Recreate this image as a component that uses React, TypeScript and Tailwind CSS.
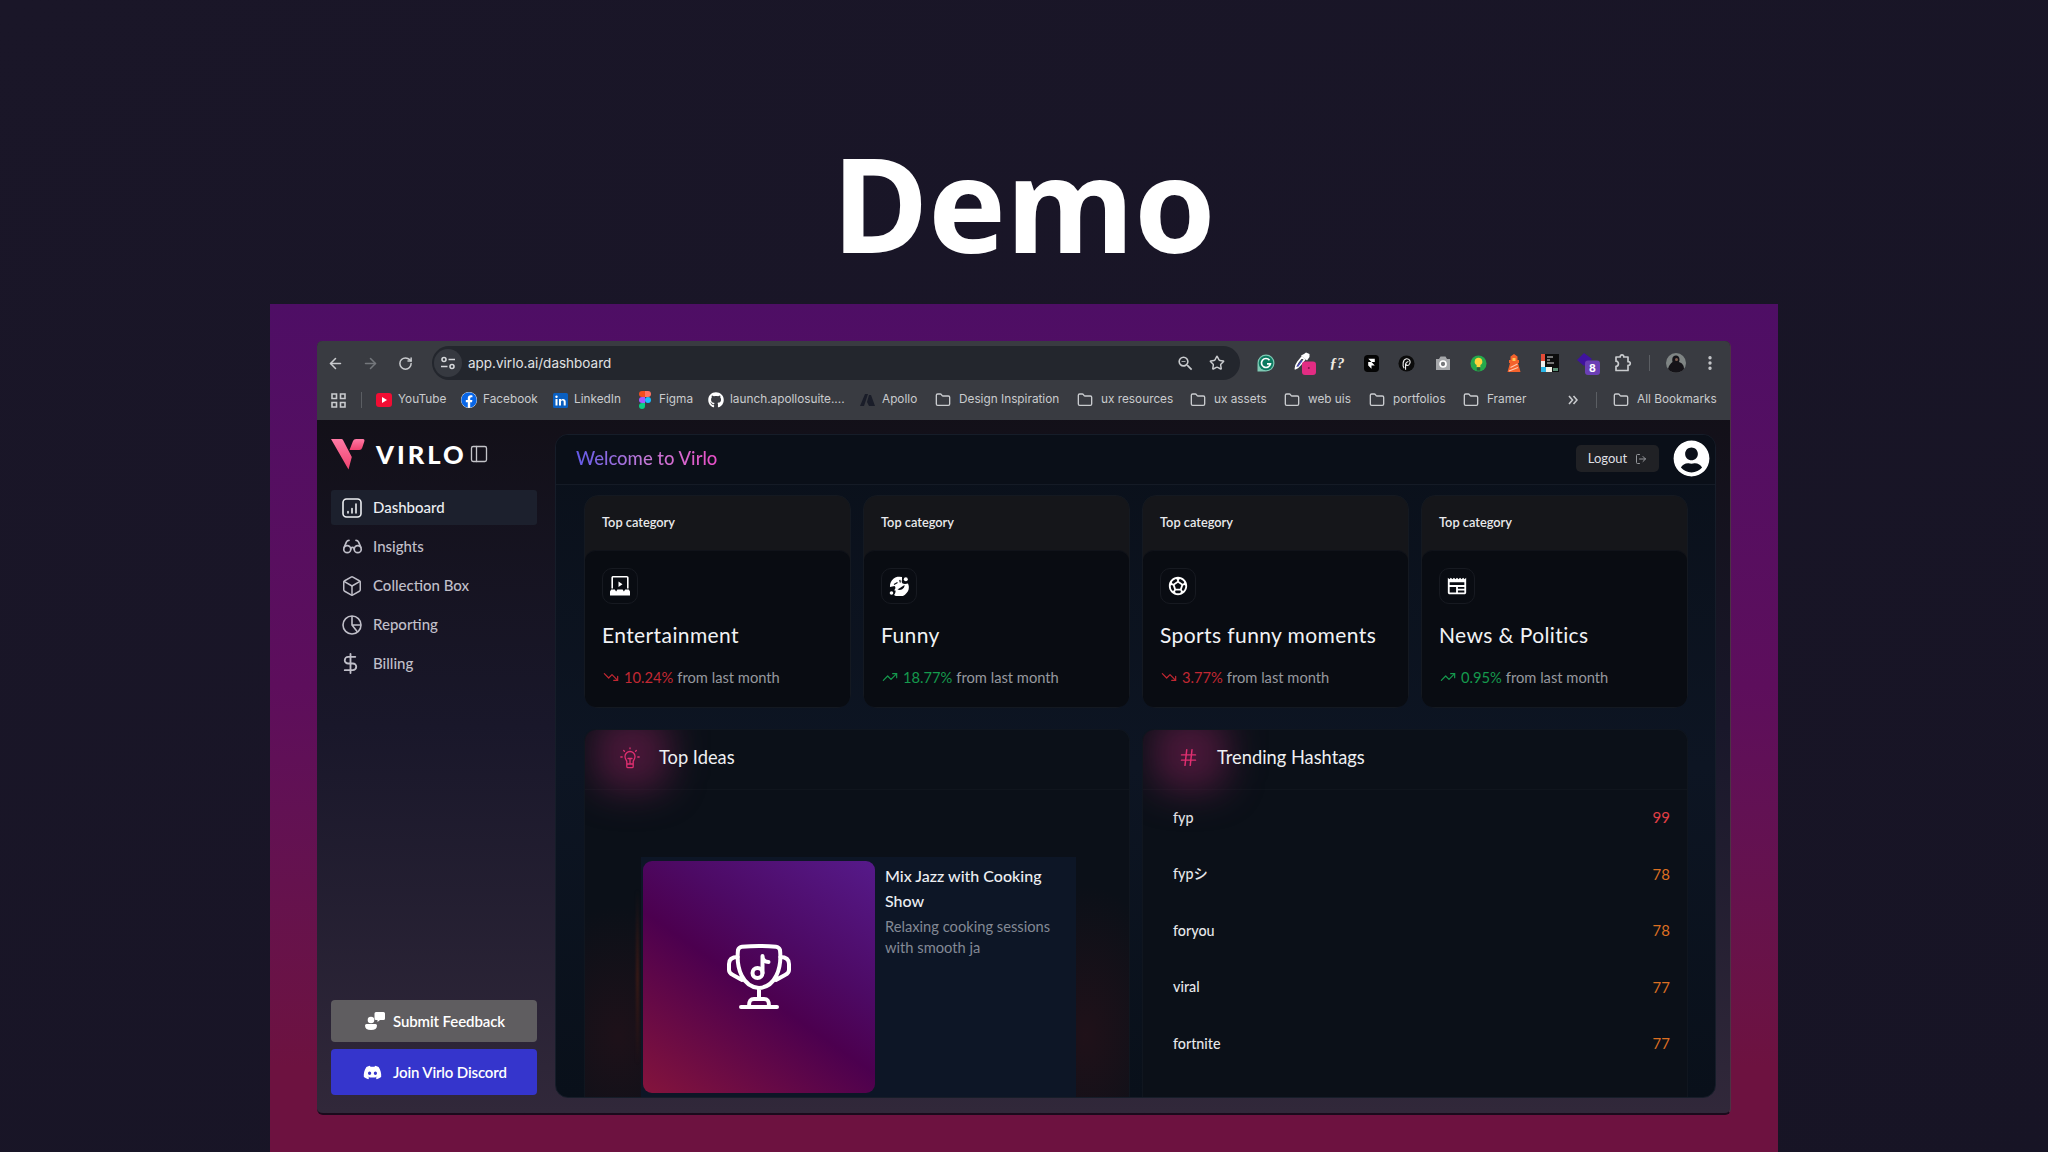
import type { ReactNode } from "react";
import { clsx } from "clsx";
import {
  ArrowLeft,
  ArrowRight,
  Box,
  DollarSign,
  EllipsisVertical,
  Folder,
  Glasses,
  Hash,
  LogOut,
  PanelLeft,
  RotateCw,
  Star,
  TrendingDown,
  TrendingUp,
} from "lucide-react";
import { FaDiscord, FaFacebook, FaGithub, FaUserCircle } from "react-icons/fa";
import { MdNewspaper, MdSportsSoccer, MdZoomOut } from "react-icons/md";

type Category = { name: string; change: string; up: boolean; icon: ReactNode };

function TheaterIcon() {
  return (
    <svg viewBox="0 0 20 20" className="size-5" fill="#fff">
      <path d="M2.2 12.500V1.500A1 1 0 0 1 3.200.8h13.600a1 1 0 0 1 1 1V12.500" fill="none" stroke="#fff" strokeWidth="1.600" />
      <path d="M8.500 5.500v5.500l4-2.750zM0 19.500v-4l1.200-2h3.600l1.300 2 1.300-2h5.200l1.300 2 1.300-2h3.600l1.200 2v4z" />
    </svg>
  );
}

function FunnyIcon() {
  return (
    <svg viewBox="0 0 20 20" className="size-5" fill="#fff">
      <path d="M13 1A9.500 9.500 0 0 0 1 11l4.500-1c1.500 1 1 3-.5 4.200l1.500.3c.3 1.800-.5 3.500-1.500 4.500A9.500 9.500 0 0 0 19 7.500L16 8c-2.500 0-4-1.500-3-4z" />
      <path d="M8.500 13.500l7-4.500c.3 3-3 6-7 4.500z" fill="#080b12" />
      <path d="M5 8.500l3.500-2M10.800 3.800l.5 2.700" stroke="#080b12" strokeWidth="1.200" />
      <circle cx="16.800" cy="3.200" r="2" />
      <circle cx="2.500" cy="17" r="1.800" />
    </svg>
  );
}

const categories: Category[] = [
  { name: "Entertainment", change: "10.24%", up: false, icon: <TheaterIcon /> },
  { name: "Funny", change: "18.77%", up: true, icon: <FunnyIcon /> },
  { name: "Sports funny moments", change: "3.77%", up: false, icon: <MdSportsSoccer className="size-[22px]" /> },
  { name: "News & Politics", change: "0.95%", up: true, icon: <MdNewspaper className="size-[22px]" /> },
];

const hashtags = [
  { tag: "fyp", score: 99 },
  { tag: "fypシ", score: 78 },
  { tag: "foryou", score: 78 },
  { tag: "viral", score: 77 },
  { tag: "fortnite", score: 77 },
];

function ChartIcon() {
  return (
    <svg viewBox="0 0 20 20" className="size-5" fill="none" stroke="currentColor" strokeWidth="1.600" strokeLinecap="round">
      <rect x="1" y="1" width="18" height="18" rx="3.500" />
      <path d="M6 15v-1.500M10 15v-4.500M14 15V6" />
    </svg>
  );
}

function PieIcon() {
  return (
    <svg viewBox="0 0 20 20" className="size-5" fill="none" stroke="currentColor" strokeWidth="1.600" strokeLinejoin="round">
      <circle cx="10" cy="10" r="9" />
      <path d="M10 1v9l5.500 7M10 10h9" />
    </svg>
  );
}

const navItems = [
  { label: "Dashboard", icon: <ChartIcon /> },
  { label: "Insights", icon: <Glasses className="size-[21px]" strokeWidth={1.900} /> },
  { label: "Collection Box", icon: <Box className="-ml-px size-[22px]" strokeWidth={1.600} /> },
  { label: "Reporting", icon: <PieIcon /> },
  { label: "Billing", icon: <DollarSign className="-ml-[3px] size-[23px]" strokeWidth={1.900} /> },
];

function FigmaIcon() {
  return (
    <svg viewBox="0 0 12 18" className="h-[18px] w-3">
      <path d="M3 0h3v6H3a3 3 0 0 1 0-6z" fill="#f24e1e" />
      <path d="M6 0h3a3 3 0 0 1 0 6H6z" fill="#ff7262" />
      <path d="M3 6h3v6H3a3 3 0 0 1 0-6z" fill="#a259ff" />
      <circle cx="9" cy="9" r="3" fill="#1abcfe" />
      <path d="M3 12h3v3a3 3 0 1 1-3-3z" fill="#0acf83" />
    </svg>
  );
}

function Bookmark({ icon, label, className }: { icon: ReactNode; label: string; className: string }) {
  return (
    <div className={clsx("flex shrink-0 items-center whitespace-nowrap", className)}>
      {icon}
      <span>{label}</span>
    </div>
  );
}

function FolderIcon() {
  return <Folder className="h-4 w-[18px]" strokeWidth={2} />;
}

function Extensions() {
  return (
    <div className="flex items-center">
      <svg viewBox="0 0 18 18" className="size-[18px]">
        <path d="M9 .5A8.500 8.500 0 1 1 9 17.500H.5V9A8.500 8.500 0 0 1 9 .5z" fill="#7fc9b4" />
        <circle cx="9" cy="9" r="7.300" fill="#0c7a60" />
        <path d="M12.500 6.200a4.500 4.500 0 1 0 .9 3.600H10" fill="none" stroke="#fff" strokeWidth="1.700" />
      </svg>
      <svg viewBox="0 0 24 24" className="ml-[17px] size-6">
        <path d="M3.500 17.500c0-3 1-4.500 2.500-6.500l4-5 2.500 2.500-4 5c-1.500 2-2.500 3.500-5 4z" fill="none" stroke="#fff" strokeWidth="1.800" />
        <path d="M5.500 15.500l4.500-6" stroke="#4a4cc4" strokeWidth="1.300" />
        <path d="M9 4.500l3-1.500 2-1.500 3.500 1.500v3l-2.500 3.500z" fill="#fff" />
        <rect x="10" y="10.500" width="14" height="13.500" rx="3" fill="#e32c83" />
        <circle cx="16.800" cy="17" r="1" fill="#84144b" />
      </svg>
      <span className="ml-[11px] w-5 text-center font-['Liberation_Serif'] text-[15px] leading-5 font-bold text-[#eeeae2] italic">ƒ?</span>
      <svg viewBox="0 0 16 18" className="ml-[17px] h-[17px] w-[15px]">
        <rect width="16" height="18" rx="4" fill="#050505" />
        <path d="M4.500 4h7v3.500H8l3.500 3.500H8v3.500L4.500 11V7.500H8z" fill="#fff" />
      </svg>
      <svg viewBox="0 0 18 18" className="ml-[19px] size-[17px]">
        <circle cx="9" cy="9" r="8.500" fill="#0b0b0b" />
        <path d="M6.500 14c-2-3-1.500-9.500 2.500-10 4-.3 5 4.500 2.500 6.500-2 1.500-4-.5-3-2 1-1.300 2.200-.8 2-2M8 15.500V9" fill="none" stroke="#eee" strokeWidth="1.200" />
      </svg>
      <svg viewBox="0 0 16 16" className="ml-5 size-4">
        <path d="M1 4h3l1.500-2.500h5L12 4h3v11H1z" fill="#a5a7aa" />
        <circle cx="8" cy="9" r="3" fill="#77797c" stroke="#fff" strokeWidth="1.700" />
      </svg>
      <svg viewBox="0 0 18 18" className="ml-[19px] size-[17px]">
        <circle cx="9" cy="9" r="8.500" fill="#25a94c" />
        <path d="M9 3a4 4 0 0 0-2 7.500V13h4v-2.500A4 4 0 0 0 9 3z" fill="#ffd23c" />
        <path d="M7.200 13h3.600v3.500H7.200z" fill="#2d5b39" />
      </svg>
      <svg viewBox="0 0 14 18" className="ml-5 h-[18px] w-3.5">
        <path d="M7 0l3.500 2.500V6H12v3h-1l2.500 9H.5L3 9H2V6h1.500V2.500z" fill="#f4622c" />
        <path d="M5.500 4h3v3h-3z" fill="#ffc857" />
        <path d="M3.500 13.500l7-3.500M2 17l9-3.500" stroke="#ffc6ad" strokeWidth="1.300" />
      </svg>
      <svg viewBox="0 0 18 18" className="ml-5 size-[18px]">
        <rect width="18" height="18" fill="#0d0d0d" />
        <rect width="4" height="7" fill="#e64b37" />
        <path d="M0 7h4v6H0z" fill="#eee" />
        <rect y="13" width="5" height="5" fill="#29b6e8" />
        <path d="M5 13h6v5H5z" fill="#f1f1e7" />
        <path d="M12 14h5v3h-5z" fill="#5b8f76" />
        <path d="M6 3h6M6 6h3M6 9h7" stroke="#ddd" strokeWidth="1.200" />
      </svg>
      <svg viewBox="0 0 24 24" className="ml-[17px] size-6">
        <path d="M8 2l8 6-8 7-7-6z" fill="#3f139e" />
        <rect x="9" y="9.500" width="15" height="14.500" rx="3" fill="#6b3fb5" />
        <text x="16.500" y="20.500" fontSize="10.500" fontWeight="700" fill="#fff" textAnchor="middle" fontFamily="Inter, sans-serif">8</text>
      </svg>
      <svg viewBox="0 0 20 20" className="ml-[13px] size-5" fill="none" stroke="currentColor" strokeWidth="1.700" strokeLinejoin="round">
        <path d="M3 4h4.200C7 1.200 11 1.200 10.800 4H15v4.700c3-.2 3 3.800 0 3.600V17.500H3v-4.200c3.200 0 3.200-5.100 0-5.100z" />
      </svg>
    </div>
  );
}

function BrowserChrome() {
  return (
    <div className="h-[79px] shrink-0 rounded-t-[5px] bg-[#393b41] font-['Inter',sans-serif] text-[#c9cbce]">
      <div className="flex h-11 items-center pl-2.5">
        <ArrowLeft className="size-[17px]" strokeWidth={2.200} />
        <ArrowRight className="ml-[18px] size-[17px] text-[#74777c]" strokeWidth={2.200} />
        <RotateCw className="ml-[19px] size-[15px]" strokeWidth={2.400} />
        <div className="ml-[19px] flex h-[34px] w-[808px] items-center rounded-full bg-[#23262d] pl-[2px]">
          <span className="flex size-7 items-center justify-center rounded-full bg-[#363940]">
            <svg viewBox="0 0 14 14" className="size-3.5" fill="none" stroke="#d5d7da" strokeWidth="1.600">
              <circle cx="3" cy="3.500" r="2" />
              <path d="M7.500 3.500H14M0 10.500h6.500" />
              <circle cx="11" cy="10.500" r="2" />
            </svg>
          </span>
          <span className="ml-1.5 text-[13.500px] text-[#e0e2e4]">app.virlo.ai/dashboard</span>
          <MdZoomOut className="ml-auto size-[19px]" />
          <Star className="mr-[15px] ml-3.5 size-4" strokeWidth={2.200} />
        </div>
        <div className="ml-[17px]">
          <Extensions />
        </div>
        <span className="ml-4 h-4 w-px bg-[#5b5e63]" />
        <svg viewBox="0 0 20 20" className="ml-4 size-5">
          <circle cx="10" cy="10" r="10" fill="#7f8584" />
          <path d="M2 16c1-4 3-6 4.500-7-1-5 1-6.500 3.500-6.500S14.500 5 13 9c3 1 5 3 5 7-4 5-12 5-16 0z" fill="#151318" />
          <circle cx="10.500" cy="6.500" r="1.500" fill="#805f52" />
        </svg>
        <EllipsisVertical className="ml-[15px] size-[18px]" strokeWidth={2.500} />
      </div>
      <div className="flex h-[30px] items-center pl-3.5 text-[11.800px]">
        <svg viewBox="0 0 15 15" className="size-[15px]" fill="none" stroke="currentColor" strokeWidth="1.600">
          <path d="M1 1h4.500v4.500H1zM9.500 1H14v4.500H9.500zM1 9.500h4.500V14H1zM9.500 9.500H14V14H9.500z" />
        </svg>
        <span className="ml-[15px] h-4 w-px bg-[#5b5e63]" />
        <Bookmark
          className="ml-[14px] w-[85px] gap-1.5"
          label="YouTube"
          icon={
            <svg viewBox="0 0 16 14" className="h-3.5 w-4">
              <rect width="16" height="14" rx="3" fill="#f20d33" />
              <path d="M6 4v6l5-3z" fill="#fff" />
            </svg>
          }
        />
        <Bookmark className="w-[92px] gap-1.5" label="Facebook" icon={<FaFacebook className="size-4 rounded-full bg-white text-[#0866e8]" />} />
        <Bookmark
          className="w-[86px] gap-1.5"
          label="LinkedIn"
          icon={
            <svg viewBox="0 0 15 15" className="size-[15px]">
              <rect width="15" height="15" rx="1.500" fill="#0a5fc0" />
              <path d="M2.500 6h2v6.500h-2zM6 6h2v1c1-1.600 4.700-1.600 4.700 1.700v3.800h-2V9c0-1.900-2.700-1.900-2.700 0v3.500H6z" fill="#fff" />
              <circle cx="3.500" cy="3.700" r="1.200" fill="#fff" />
            </svg>
          }
        />
        <Bookmark className="w-[69px] gap-2" label="Figma" icon={<FigmaIcon />} />
        <Bookmark className="w-[152px] gap-1.5" label="launch.apollosuite...." icon={<FaGithub className="size-4 text-white" />} />
        <Bookmark
          className="w-[74px] gap-[7px]"
          label="Apollo"
          icon={
            <svg viewBox="0 0 15 12" className="h-3 w-[15px]" fill="#1a1d29">
              <path d="M5 0h3L4 12H0zM9 1l2 0 4 11H9l-2-4z" />
            </svg>
          }
        />
        <Bookmark className="w-[142px] gap-[7px]" label="Design Inspiration" icon={<FolderIcon />} />
        <Bookmark className="w-[113px] gap-[7px]" label="ux resources" icon={<FolderIcon />} />
        <Bookmark className="w-[94px] gap-[7px]" label="ux assets" icon={<FolderIcon />} />
        <Bookmark className="w-[85px] gap-[7px]" label="web uis" icon={<FolderIcon />} />
        <Bookmark className="w-[94px] gap-[7px]" label="portfolios" icon={<FolderIcon />} />
        <Bookmark className="w-[106px] gap-[7px]" label="Framer" icon={<FolderIcon />} />
        <svg viewBox="0 0 10 10" className="size-2.5" fill="none" stroke="currentColor" strokeWidth="1.600">
          <path d="M1 1l3.500 4L1 9M5.500 1L9 5 5.500 9" />
        </svg>
        <span className="ml-[18px] h-4 w-px bg-[#5b5e63]" />
        <Bookmark className="ml-[15px] gap-[7px]" label="All Bookmarks" icon={<FolderIcon />} />
      </div>
    </div>
  );
}

function Sidebar() {
  return (
    <aside className="flex w-[238px] shrink-0 flex-col pt-4 pb-[18px] pl-3.5">
      <div className="flex h-9 items-center">
        <svg viewBox="0 0 34 32" className="h-8 w-[34px]">
          <defs>
            <linearGradient id="virlo" x1="0" y1="0" x2="0" y2="1">
              <stop offset="0" stopColor="#ff7aa5" />
              <stop offset="1" stopColor="#f0426f" />
            </linearGradient>
          </defs>
          <path d="M0 1h10.500q1 0 1.500 1l8.800 17-3.300 12.500z" fill="url(#virlo)" />
          <path d="M25 1h7q2 0 1.300 2.500l-2 6q-.8 2.500-3 2.500H18.500L22 3q.8-2 3-2z" fill="url(#virlo)" />
        </svg>
        <span className="ml-[11px] font-['Lato',sans-serif] text-[25.500px] leading-8 font-black tracking-[3px] text-white">VIRLO</span>
        <PanelLeft className="ml-0.5 size-5 text-[#c3c3c8]" strokeWidth={1.600} />
      </div>
      <nav className="mt-[18px] w-[206px]">
        {navItems.map((item, index) => (
          <div
            key={item.label}
            className={clsx(
              "mb-1 flex h-[35px] items-center rounded-[3px] pl-[11px] text-[15px] font-medium",
              index === 0 ? "bg-[#1c202d] text-[#eceef2]" : "text-[#c0bfc9]",
            )}
          >
            <span className="flex w-[31px] items-center">{item.icon}</span>
            {item.label}
          </div>
        ))}
      </nav>
      <div className="mt-auto w-[206px] text-[15px] font-semibold text-white">
        <div className="flex h-[42px] items-center rounded-[4px] bg-[#5f5d60] pl-[34px]">
          <svg viewBox="0 0 20 18" className="mr-2 h-[18px] w-5" fill="#fff">
            <circle cx="6" cy="8" r="3.300" />
            <path d="M0 13.500q0-1.500 1.500-1.500h9q1.500 0 1.500 1.500 0 4.500-6 4.500t-6-4.500zM11 0h7.500Q20 0 20 1.500v5Q20 8 18.500 8H15l-2.500 2V8H11Q9.500 8 9.500 6.500v-5Q9.500 0 11 0z" />
          </svg>
          <span className="tracking-[-0.1px]">Submit Feedback</span>
        </div>
        <div className="mt-[7px] flex h-[46px] items-center rounded-[4px] bg-[#3535cc] pl-8">
          <FaDiscord className="mr-[11px] size-[19px]" />
          <span className="tracking-[-0.150px]">Join Virlo Discord</span>
        </div>
      </div>
    </aside>
  );
}

function CategoryCard({ category }: { category: Category }) {
  const Trend = category.up ? TrendingUp : TrendingDown;

  return (
    <div className="flex h-[213px] flex-col rounded-[14px] border border-[#141921] bg-[#15161a]">
      <div className="flex h-[54px] items-center pl-[17px] text-[12.800px] font-semibold text-[#e9eaec]">Top category</div>
      <div className="flex-1 rounded-[11px] border-t border-[#10131a] bg-[#090c12] pt-[17px] pl-[17px]">
        <div className="flex size-9 items-center justify-center rounded-[10px] border border-[#171a21] text-white">{category.icon}</div>
        <h3 className="mt-[15px] text-[21px] leading-8 tracking-[0.400px] text-[#f2f3f5]">{category.name}</h3>
        <p className="mt-4 flex items-center text-[14.700px] leading-5 text-[#96989e]">
          <Trend className={clsx("mr-[5px] ml-px size-4", category.up ? "text-[#159a4d]" : "text-[#c22832]")} strokeWidth={1.800} />
          <span className={clsx("mr-1", category.up ? "text-[#159a4d]" : "text-[#c22832]")}>{category.change}</span>
          from last month
        </p>
      </div>
    </div>
  );
}

function PanelTitle({ icon, label }: { icon: ReactNode; label: string }) {
  return (
    <div className="relative flex h-[60px] shrink-0 items-center border-b border-[#10151d] pb-1 text-[18.300px] text-[#eff0f3]">
      <div className="absolute top-[-14px] left-2.5 size-[74px] rounded-[20px] bg-[#6a1b4a]/65 blur-[18px]" />
      <span className="relative ml-[35px] flex w-[39px] text-[#df2f70]">{icon}</span>
      <span className="relative">{label}</span>
    </div>
  );
}

function BulbIcon() {
  return (
    <svg viewBox="0 0 20 22" className="h-[22px] w-5" fill="none" stroke="currentColor" strokeWidth="1.300" strokeLinecap="round" strokeLinejoin="round">
      <path d="M10 4.500a5 5 0 0 0-5 5c0 2.500 1.500 3.500 1.800 5v5q0 1.200 1.200 1.200h4q1.200 0 1.200-1.200v-5c.3-1.500 1.800-2.500 1.800-5a5 5 0 0 0-5-5zM7 17h6M8 11.500h4M10 11.500v5M10 .8v.9M3.700 3.500l.7.7M16.300 3.500l-.7.7M.8 10h1.400M17.800 10h1.400" />
    </svg>
  );
}

function TrophyIcon() {
  return (
    <svg viewBox="0 0 64 66" className="h-[66px] w-16" fill="none" stroke="#fff" strokeWidth="4" strokeLinecap="round" strokeLinejoin="round">
      <path d="M11 6q1-3 4-3.300 17-1.400 34 0 3 .3 4 3.300c2 19-5 37-21 38C16 43 9 25 11 6zM11 13c-6 0-9 2-9 7v6c0 3 2 4 4 5l9 5M53 13c6 0 9 2 9 7v6c0 3-2 4-4 5l-9 5M32 45v10M14 63h36M22 62c0-6 2-7 5-7h10c3 0 5 1 5 7" />
      <circle cx="30.500" cy="29" r="5" />
      <path d="M35.500 29V12c0 4 3 6 6 6" />
    </svg>
  );
}

function TopIdeas() {
  return (
    <section className="flex flex-col overflow-hidden rounded-t-[12px] border border-b-0 border-[#10161f] bg-[#0b1018]">
      <PanelTitle icon={<BulbIcon />} label="Top Ideas" />
      <div className="min-h-0 flex-1 bg-[radial-gradient(ellipse_90px_130px_at_6%_80%,rgba(48,18,26,0.5),transparent),radial-gradient(ellipse_90px_150px_at_92%_80%,rgba(48,18,26,0.55),transparent)] pt-[67px] pl-14">
        <div className="relative flex h-[245px] w-[435px] bg-[#0d1626] pt-1 pl-0.5">
          <div className="absolute top-8 -left-[5px] h-[176px] w-[3px] bg-linear-to-b from-transparent via-[#3a1a16] to-transparent blur-[1px]" />
          <div className="flex size-[232px] shrink-0 items-center justify-center rounded-[9px] bg-linear-[35deg,#84143c_0%,#4c004f_46%,#4d0a65_65%,#561a8a_100%]">
            <TrophyIcon />
          </div>
          <div className="pt-0.5 pl-2.5">
            <h4 className="w-[170px] text-[16px] leading-[25px] font-medium text-[#eceef2]">Mix Jazz with Cooking Show</h4>
            <p className="mt-[3px] w-[178px] text-[14.700px] leading-[21px] text-[#838995]">Relaxing cooking sessions with smooth ja</p>
          </div>
        </div>
      </div>
    </section>
  );
}

function TrendingHashtags() {
  return (
    <section className="flex flex-col overflow-hidden rounded-t-[12px] border border-b-0 border-[#10161f] bg-[#0b1018]">
      <PanelTitle icon={<Hash className="size-[21px]" strokeWidth={1.700} />} label="Trending Hashtags" />
      <ul className="-mt-px pr-[17px] pl-[30px] text-[14.300px] font-medium text-[#e6e7ea]">
        {hashtags.map((row) => (
          <li key={row.tag} className="flex h-[56.600px] items-center justify-between">
            <span>{row.tag}</span>
            <span className={clsx("text-[15px] font-normal", row.score > 90 ? "text-[#e13f45]" : "text-[#dc6f22]")}>{row.score}</span>
          </li>
        ))}
      </ul>
    </section>
  );
}

function Dashboard() {
  return (
    <main className="mt-3.5 mr-3.5 mb-[15px] flex min-w-0 flex-1 flex-col overflow-hidden rounded-[13px] border border-[#161d29] bg-linear-to-b from-[#0a101a] via-[#0d1523] to-[#09101a]">
      <header className="flex h-[50px] shrink-0 items-center border-b border-[#151b26] bg-[#0a0f18] pr-[5px] pb-0.5 pl-5">
        <h1 className="bg-linear-to-r from-[#6259e8] via-[#c478d5] to-[#e84ec7] bg-clip-text text-[18.500px] font-medium text-transparent">Welcome to Virlo</h1>
        <div className="ml-auto flex h-[27px] w-[83px] items-center justify-center gap-2 rounded-[5px] bg-[#202125] text-[13px] text-[#dedfe2]">
          Logout
          <LogOut className="size-3 text-[#96989c]" strokeWidth={2} />
        </div>
        <FaUserCircle className="ml-3.5 size-[37px] rounded-full text-white" />
      </header>
      <div className="grid grid-cols-4 gap-3 pt-2.5 pr-[27px] pl-7">
        {categories.map((category) => (
          <CategoryCard key={category.name} category={category} />
        ))}
      </div>
      <div className="mt-[21px] grid min-h-0 flex-1 grid-cols-2 gap-3 pr-[27px] pl-7">
        <TopIdeas />
        <TrendingHashtags />
      </div>
    </main>
  );
}

export default function App() {
  return (
    <div className="flex h-[1152px] w-[2048px] flex-col overflow-hidden bg-[#191525] bg-linear-to-br from-[#1a1628] to-[#171425] font-['Lato','Noto_Sans_CJK_JP',sans-serif]">
      <div className="flex h-[304px] shrink-0 justify-center pt-[113px]">
        <h1 className="font-['Noto_Sans',sans-serif] text-[131px] leading-[178px] font-bold text-white">Demo</h1>
      </div>
      <div className="ml-[270px] h-[848px] w-[1508px] bg-linear-to-b from-[#4e0e65] via-[#5d0e5c] via-45% to-[#6d1240] to-90% pt-[37px] pl-[47px]">
        <div className="flex h-[774px] w-[1414px] flex-col rounded-[6px] border-r border-b-2 border-r-[#4b3344] border-b-[#1a0a1c] bg-linear-to-b from-[#110e14] via-[#19172a] via-50% to-[#31283a]">
          <BrowserChrome />
          <div className="flex min-h-0 flex-1">
            <Sidebar />
            <Dashboard />
          </div>
        </div>
      </div>
    </div>
  );
}
